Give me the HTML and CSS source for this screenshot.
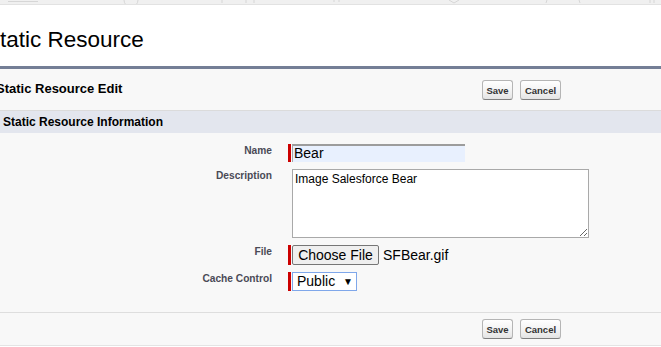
FILE: index.html
```html
<!DOCTYPE html>
<html lang="en">

<head>
    <meta charset="UTF-8">
    <meta name="viewport" content="width=device-width, initial-scale=1.0">
    <title>Static Resource Edit</title>
    <link rel="stylesheet" href="styles.css">
</head>

<body>
    <!-- strip of the tab bar, mostly scrolled away -->
    <div class="topstrip">
        <svg width="661" height="4" viewBox="0 0 661 4">
            <g fill="none" stroke="#d6d6d6" stroke-width="1">
                <line x1="8" y1="1.5" x2="38" y2="1.5" />
                <path d="M124 0 a7 7 0 0 0 14 0" />
                <path d="M222 0 v3 M246 0 v3 M254 0 v3" />
                <path d="M334 0 v2 M339 0 v2" />
                <path d="M449 0 l5 3 l5 -3" />
                <path d="M546 3 a17 10 0 0 1 34 0" />
                <path d="M650 0 v3 M654 0 v3" />
            </g>
        </svg>
    </div>

    <div class="page-title">
        <h1>Static Resource</h1>
    </div>

    <div class="pb">
        <div class="pb-header">
            <div class="pb-title">
                <h2>Static Resource Edit</h2>
            </div>
            <div class="pb-buttons">
                <button class="btn btn-save">Save</button>
                <button class="btn btn-cancel">Cancel</button>
            </div>
        </div>

        <div class="section-head">
            <h3>Static Resource Information</h3>
        </div>

        <div class="form">
            <div class="label">Name</div>
            <div class="field">
                <span class="required"></span>
                <div class="name-input">Bear</div>
            </div>

            <div class="label">Description</div>
            <div class="field">
                <span class="spacer"></span>
                <textarea class="desc">Image Salesforce Bear</textarea>
            </div>

            <div class="label">File</div>
            <div class="field">
                <span class="required"></span>
                <div class="file-btn">Choose File</div>
                <span class="file-name">SFBear.gif</span>
            </div>

            <div class="label">Cache Control</div>
            <div class="field">
                <span class="required"></span>
                <div class="select">Public <span class="arrow">▼</span></div>
            </div>
        </div>

        <div class="pb-bottom">
            <div class="pb-title"></div>
            <div class="pb-buttons">
                <button class="btn btn-save">Save</button>
                <button class="btn btn-cancel">Cancel</button>
            </div>
        </div>
    </div>
</body>

</html>
```

FILE: styles.css
```css
body {
    margin: 0;
    padding: 0;
    background-color: #ffffff;
    font-family: "Liberation Sans", Arial, sans-serif;
    color: #000;
    overflow: hidden;
}

.topstrip {
    height: 4px;
    background-color: #f0f0f0;
    border-bottom: 1px solid #e2e2e2;
}

.topstrip svg {
    display: block;
}

.page-title {
    height: 61px;
    box-sizing: border-box;
    padding-top: 22px;
}

.page-title h1 {
    margin: 0 0 0 -15px;
    font-size: 22.5px;
    font-weight: normal;
    line-height: 26px;
    color: #000;
    white-space: nowrap;
}

.pb {
    background-color: #f8f8f8;
    border-top: 3px solid #747e96; /* blue-gray block line */
}

.pb-header,
.pb-bottom {
    display: flex;
    align-items: flex-start;
}

.pb-header {
    height: 42px;
    box-sizing: border-box;
    padding-top: 11px;
    border-bottom: 1px solid #dbdbdb;
}

.pb-bottom {
    height: 34px;
    box-sizing: border-box;
    padding-top: 6px;
    border-top: 1px solid #dedede;
    border-bottom: 1px solid #e4e4e4;
}

.pb-title {
    width: 482px;
    flex: none;
}

.pb-title h2 {
    margin: 0 0 0 -4px;
    font-size: 13px;
    font-weight: bold;
    line-height: 18px;
    color: #000;
}

.pb-buttons {
    display: flex;
    gap: 7px;
}

.btn {
    height: 20px;
    padding: 0;
    background: linear-gradient(#ffffff, #f1f1f1 60%, #e4e4e4);
    border: 1px solid #b5b5b5;
    border-bottom-color: #7f7f7f;
    border-radius: 3px;
    font-family: "Liberation Sans", Arial, sans-serif;
    font-size: 9.5px;
    font-weight: bold;
    color: #333;
    text-align: center;
}

.btn-save {
    width: 31px;
}

.btn-cancel {
    width: 41px;
}

.section-head {
    height: 22px;
    background-color: #e3e6ee;
    display: flex;
    align-items: center;
}

.section-head h3 {
    margin: 0 0 0 3px;
    font-size: 12px;
    font-weight: bold;
    color: #000;
}

.form {
    display: grid;
    grid-template-columns: 272px 1fr;
    align-content: start;
    column-gap: 16px;
    row-gap: 7px;
    padding-top: 11px;
    height: 179px;
    box-sizing: border-box;
}

.label {
    padding-top: 1px;
    font-size: 10.2px;
    font-weight: bold;
    line-height: 12px;
    color: #4a4a56;
    text-align: right;
}

.field {
    display: flex;
    align-items: stretch;
}

.required {
    width: 3px;
    margin-right: 1px;
    background-color: #c00;
}

.spacer {
    width: 4px;
}

.name-input {
    width: 173px;
    height: 18px;
    box-sizing: border-box;
    padding-left: 1px;
    background-color: #e8f0fe;
    border-top: 2px solid #9c9c9c;
    border-left: 1px solid #a8a8a8;
    font-size: 14px;
    line-height: 15px;
}

.desc {
    display: block;
    width: 297px;
    height: 69px;
    box-sizing: border-box;
    margin: 0;
    padding: 2px 2px;
    background-color: #fff;
    border: 1px solid #a9a9a9;
    font-family: "Liberation Sans", Arial, sans-serif;
    font-size: 12px;
    line-height: 14px;
    color: #000;
}

.file-btn {
    width: 87px;
    height: 20px;
    box-sizing: border-box;
    background-color: #efefef;
    border: 1px solid #767676;
    border-radius: 2px;
    font-size: 14px;
    line-height: 18px;
    text-align: center;
}

.file-name {
    margin-left: 4px;
    font-size: 14px;
    line-height: 20px;
}

.select {
    width: 65px;
    height: 19px;
    box-sizing: border-box;
    padding-left: 4px;
    background-color: #fff;
    border: 1px solid #7fa7ea;
    font-size: 14px;
    line-height: 17px;
}

.arrow {
    margin-left: 4px;
    font-size: 10px;
    vertical-align: 1px;
}
```
